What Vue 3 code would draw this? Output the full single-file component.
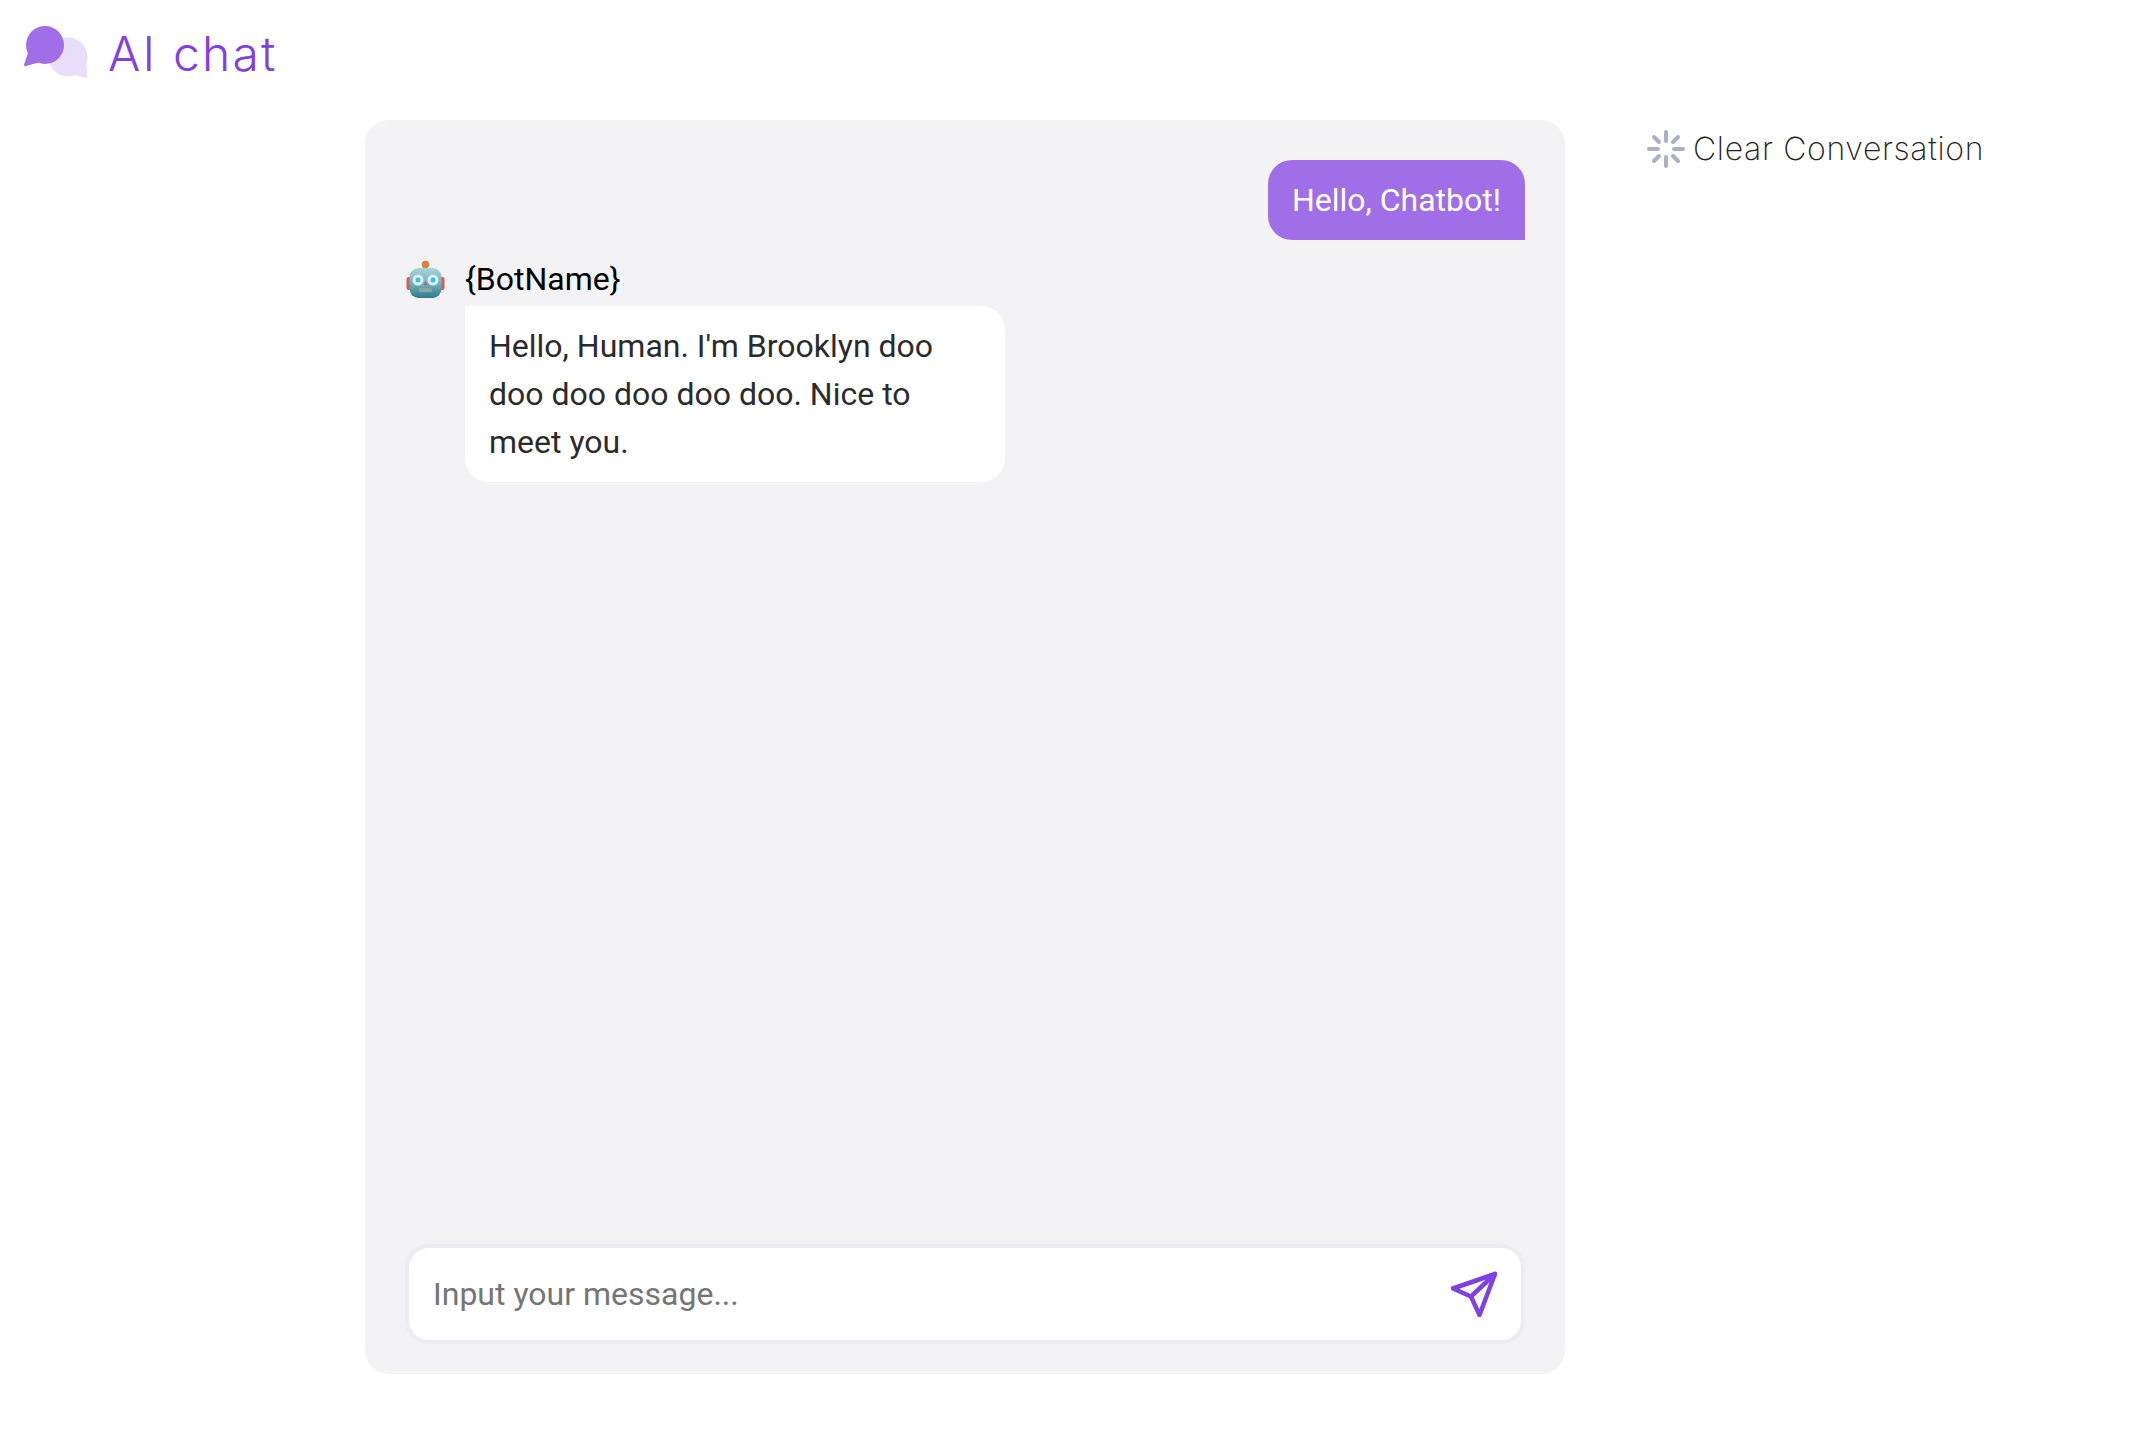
<template>
  <div class="page">
    <header class="top">
      <svg class="logo" width="64" height="54" viewBox="0 0 64 54">
        <path d="M62 34l1.500 16c.2 2-1 2.500-2.500 2L50 49z" fill="#e8def9" />
        <circle cx="44" cy="31" r="19.500" fill="#e8def9" />
        <path d="M5 24L.2 38c-.5 1.800.3 2.500 2 2L16 36z" fill="#a06fe8" />
        <circle cx="21" cy="19" r="19" fill="#a06fe8" />
      </svg>
      <span class="title">AI chat</span>
    </header>

    <div class="body">
      <section class="panel">
        <div class="messages">
          <div class="msg-user">Hello, Chatbot!</div>
          <div class="msg-bot">
            <svg class="avatar" width="40" height="40" viewBox="0 0 40 40">
              <defs>
                <linearGradient id="head" x1="0" y1="0" x2="0" y2="1">
                  <stop offset="0" stop-color="#a9d4d8" />
                  <stop offset="0.55" stop-color="#6fadb9" />
                  <stop offset="1" stop-color="#2f7a8d" />
                </linearGradient>
              </defs>
              <rect x="1.500" y="18" width="6" height="13" rx="2" fill="#cf5f58" />
              <rect x="33.500" y="18" width="6" height="13" rx="2" fill="#cf5f58" />
              <rect x="18.500" y="7" width="3" height="4" fill="#b39c8d" />
              <circle cx="20.500" cy="5.500" r="3.800" fill="#df7f3f" />
              <rect x="4.500" y="9" width="32" height="30" rx="9" fill="url(#head)" />
              <circle cx="13" cy="21" r="5.500" fill="#d9f0f4" />
              <circle cx="28" cy="21" r="5.500" fill="#d9f0f4" />
              <circle cx="13" cy="21" r="2.500" fill="#3fbcea" />
              <circle cx="28" cy="21" r="2.500" fill="#3fbcea" />
              <path d="M20.500 22l2 4h-4z" fill="#c9605c" />
              <rect x="14" y="29" width="13" height="4" rx="1.500" fill="#8aa6ac" />
            </svg>
            <div class="bot-col">
              <div class="bot-name">{BotName}</div>
              <div class="bot-bubble">Hello, Human. I'm Brooklyn doo doo doo doo doo doo. Nice to meet you.</div>
            </div>
          </div>
        </div>

        <div class="input-box">
          <input class="input" v-model="message" placeholder="Input your message..." />
          <svg class="send" width="46" height="46" viewBox="0 0 46 46" fill="none" stroke="#7f40e4" stroke-width="4.500" stroke-linejoin="round" stroke-linecap="round">
            <path d="M44 3L2 17.500l18 8L28.500 44z" />
            <path d="M44 3L20 25.500" />
          </svg>
        </div>
      </section>

      <button class="clear">
        <svg width="38" height="38" viewBox="0 0 38 38" stroke="#aeaec8" stroke-width="4" stroke-linecap="round">
          <path v-for="t in ticks" :key="t" :d="t" />
        </svg>
        <span>Clear Conversation</span>
      </button>
    </div>
  </div>
</template>

<script setup>
import { ref } from 'vue'

const message = ref('')

const ticks = [
  'M19 2v9', 'M19 27v9', 'M2 19h9', 'M27 19h9',
  'M7 7l5 5', 'M26 26l5 5', 'M31 7l-5 5', 'M12 26l-5 5',
]
</script>

<style>
html,
body {
  background: #fff;
}
</style>

<style scoped>
.page {
  width: 2132px;
  height: 1452px;
  font-family: Roboto, "Liberation Sans", sans-serif;
}
.top {
  height: 120px;
  box-sizing: border-box;
  padding: 26px 0 0 24px;
  display: flex;
  align-items: flex-start;
  gap: 20px;
}
.title {
  font-family: Inter, "Open Sans", sans-serif;
  font-weight: 300;
  font-size: 48px;
  line-height: 56px;
  letter-spacing: 2.200px;
  color: #7f40e4;
}
.body {
  display: flex;
  align-items: flex-start;
  padding-left: 365px;
}
.panel {
  width: 1200px;
  height: 1254px;
  box-sizing: border-box;
  background: #f3f3f6;
  border-radius: 24px;
  padding: 40px 40px 30px;
  display: flex;
  flex-direction: column;
}
.messages {
  flex: 1;
  display: flex;
  flex-direction: column;
}
.msg-user {
  align-self: flex-end;
  background: #a06fe8;
  color: #fff;
  font-size: 32px;
  line-height: 48px;
  padding: 16px 24px;
  border-radius: 24px 24px 0 24px;
}
.msg-bot {
  display: flex;
  gap: 20px;
  margin-top: 15px;
}
.avatar {
  margin-top: 4px;
  flex: none;
}
.bot-name {
  font-size: 32px;
  line-height: 48px;
  color: #000;
  margin-bottom: 3px;
}
.bot-bubble {
  width: 540px;
  box-sizing: border-box;
  background: #fff;
  color: #2b2b2b;
  font-size: 32px;
  line-height: 48px;
  padding: 16px 24px;
  border-radius: 0 24px 24px 24px;
}
.input-box {
  height: 100px;
  box-sizing: border-box;
  background: #fff;
  border: 4px solid #edecf4;
  border-radius: 24px;
  display: flex;
  align-items: center;
  padding: 0 24px;
}
.input {
  flex: 1;
  border: none;
  outline: none;
  background: transparent;
  font-family: inherit;
  font-size: 32px;
  color: #2b2b2b;
  padding: 0;
}
.input::placeholder {
  color: #757575;
}
.clear {
  margin: 9px 0 0 82px;
  padding: 0;
  border: none;
  background: none;
  display: flex;
  align-items: center;
  gap: 8px;
  font-family: Inter, "Open Sans", sans-serif;
  font-weight: 200;
  font-size: 32px;
  letter-spacing: 0.650px;
  color: #222;
}
</style>
